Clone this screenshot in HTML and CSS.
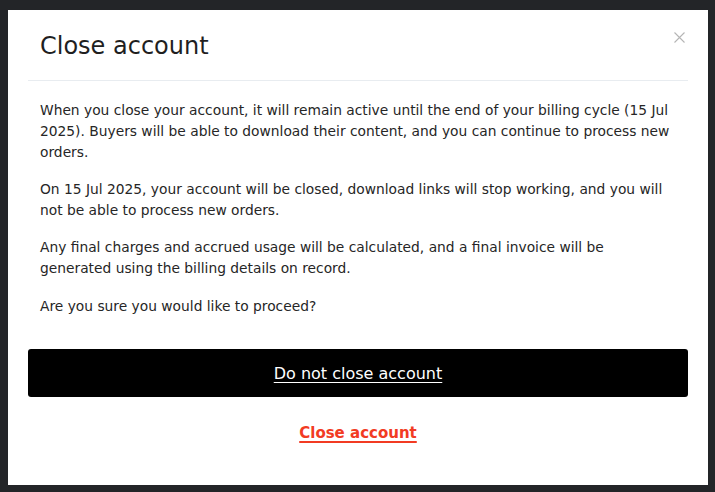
FILE: index.html
```html
<!DOCTYPE html>
<html>
<head>
<meta charset="utf-8">
<link rel="stylesheet" href="styles.css">
</head>
<body>
<div class="modal">
  <div class="modal-header">
    <h2 class="title">Close account</h2>
    <button class="close-btn" aria-label="Close">
      <svg width="11" height="11" viewBox="0 0 11 11"><path d="M0.5 0.5L10.5 10.5M10.5 0.5L0.5 10.5" stroke="#b5b5b5" stroke-width="1.1" fill="none"/></svg>
    </button>
  </div>
  <div class="modal-body">
    <p>When you close your account, it will remain active until the end of your billing cycle (15 Jul 2025). Buyers will be able to download their content, and you can continue to process new orders.</p>
    <p>On 15 Jul 2025, your account will be closed, download links will stop working, and you will not be able to process new orders.</p>
    <p>Any final charges and accrued usage will be calculated, and a final invoice will be generated using the billing details on record.</p>
    <p>Are you sure you would like to proceed?</p>
  </div>
  <div class="modal-actions">
    <a class="btn-primary" href="#">Do not close account</a>
    <a class="btn-danger" href="#">Close account</a>
  </div>
</div>
</body>
</html>
```
FILE: styles.css
```css
html, body {
  margin: 0;
  padding: 0;
}
body {
  background: #232528;
  width: 715px;
  height: 492px;
  overflow: hidden;
  font-family: "DejaVu Sans", sans-serif;
  color: #262626;
}
.modal {
  margin: 10px 0 0 8px;
  width: 700px;
  height: 475px;
  background: #fff;
  box-sizing: border-box;
  display: flex;
  flex-direction: column;
}
.modal-header {
  margin: 0 20px;
  padding: 21px 12px 19px;
  border-bottom: 1px solid #e8ecf0;
  display: flex;
  justify-content: space-between;
  align-items: flex-start;
}
.title {
  margin: 0;
  font-size: 24px;
  font-weight: 400;
  line-height: 30px;
  color: #1f1f1f;
}
.close-btn {
  background: none;
  border: 0;
  padding: 0;
  margin: 1px -9px 0 0;
  width: 11px;
  height: 11px;
  display: block;
  cursor: pointer;
}
.close-btn svg { display: block; }
.modal-body {
  padding: 19px 38px 0 32px;
  font-size: 13.8px;
  line-height: 21px;
}
.modal-body p {
  margin: 0 0 16px;
}
.modal-body p:nth-child(3) { margin-bottom: 17px; }
.modal-body p:last-child { margin-bottom: 0; }
.modal-actions {
  margin: 32px 20px 0;
  display: flex;
  flex-direction: column;
  align-items: center;
}
.btn-primary {
  align-self: stretch;
  height: 48px;
  background: #000;
  border-radius: 3px;
  color: #fff;
  font-size: 16px;
  display: flex;
  align-items: center;
  justify-content: center;
  text-decoration: underline;
  text-underline-offset: 3px;
}
.btn-danger {
  margin-top: 24px;
  color: #f23b23;
  font-weight: 700;
  font-size: 15px;
  line-height: 24px;
  text-decoration: underline;
  text-underline-offset: 3px;
  text-decoration-thickness: 2px;
}
```
